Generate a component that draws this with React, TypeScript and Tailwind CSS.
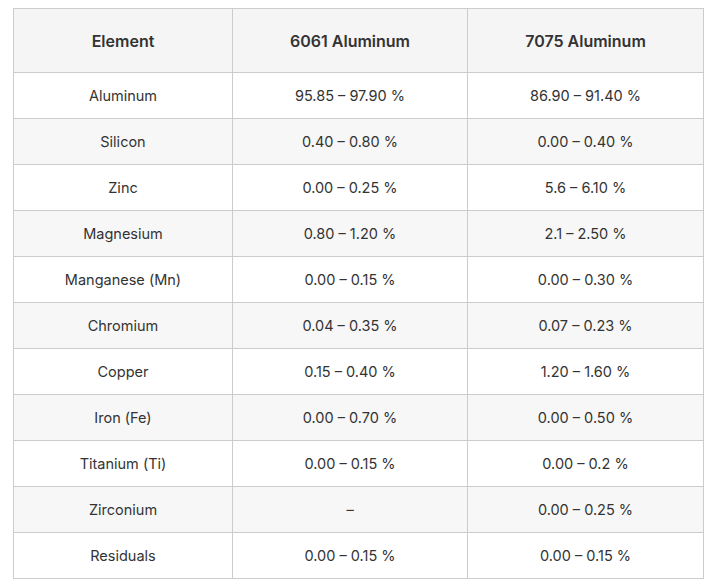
const rows: [string, string, string][] = [
  ["Aluminum", "95.85 – 97.90 %", "86.90 – 91.40 %"],
  ["Silicon", "0.40 – 0.80 %", "0.00 – 0.40 %"],
  ["Zinc", "0.00 – 0.25 %", "5.6 – 6.10 %"],
  ["Magnesium", "0.80 – 1.20 %", "2.1 – 2.50 %"],
  ["Manganese (Mn)", "0.00 – 0.15 %", "0.00 – 0.30 %"],
  ["Chromium", "0.04 – 0.35 %", "0.07 – 0.23 %"],
  ["Copper", "0.15 – 0.40 %", "1.20 – 1.60 %"],
  ["Iron (Fe)", "0.00 – 0.70 %", "0.00 – 0.50 %"],
  ["Titanium (Ti)", "0.00 – 0.15 %", "0.00 – 0.2 %"],
  ["Zirconium", "–", "0.00 – 0.25 %"],
  ["Residuals", "0.00 – 0.15 %", "0.00 – 0.15 %"],
];

export default function App() {
  return (
    <div className="w-[720px] h-[586px] bg-white pt-[8px] pl-[13px] font-['Inter',sans-serif] text-[#333]">
      <table className="w-[690px] border-collapse table-fixed">
        <colgroup>
          <col className="w-[219px]" />
          <col className="w-[235px]" />
          <col className="w-[236px]" />
        </colgroup>
        <thead>
          <tr className="bg-[#f5f5f5] h-[64px]">
            {["Element", "6061 Aluminum", "7075 Aluminum"].map((h) => (
              <th key={h} className="border border-[#ccc] text-[16px] font-semibold text-[#333] text-center">
                {h}
              </th>
            ))}
          </tr>
        </thead>
        <tbody>
          {rows.map((r, i) => (
            <tr key={r[0]} className={`h-[46px] ${i % 2 === 1 ? "bg-[#f7f7f7]" : "bg-white"}`}>
              {r.map((c, j) => (
                <td key={j} className="border border-[#ccc] text-[14.5px] text-center">
                  {c}
                </td>
              ))}
            </tr>
          ))}
        </tbody>
      </table>
    </div>
  );
}
